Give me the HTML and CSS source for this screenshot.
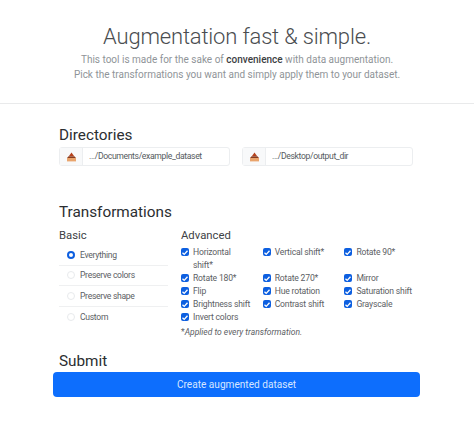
FILE: index.html
```html
<!DOCTYPE html>
<html lang="en">
<head>
<meta charset="utf-8">
<title>Augmentation</title>
<link rel="stylesheet" href="styles.css">
</head>
<body>
<header class="hero">
  <h1>Augmentation fast &amp; simple.</h1>
  <p>This tool is made for the sake of <strong>convenience</strong> with data augmentation.</p>
  <p>Pick the transformations you want and simply apply them to your dataset.</p>
</header>
<main class="main">
  <section class="dirs">
    <h2>Directories</h2>
    <div class="dir-row">
      <div class="dir">
        <span class="dir-icon"><svg width="11" height="10" viewBox="0 0 11 10"><path d="M5.5 0.5 8 4H3z" fill="#b5401c"/><path d="M2.6 4.2h5.8L10 6H1z" fill="#8a3a1c"/><path d="M1 6h9v3.4H1z" fill="#e9a46c"/></svg></span>
        <span class="dir-text">.../Documents/example_dataset</span>
      </div>
      <div class="dir">
        <span class="dir-icon"><svg width="11" height="10" viewBox="0 0 11 10"><path d="M5.5 0.5 8 4H3z" fill="#b5401c"/><path d="M2.6 4.2h5.8L10 6H1z" fill="#8a3a1c"/><path d="M1 6h9v3.4H1z" fill="#e9a46c"/></svg></span>
        <span class="dir-text">.../Desktop/output_dir</span>
      </div>
    </div>
  </section>
  <section class="trans">
    <h2>Transformations</h2>
    <div class="trans-cols">
      <div class="basic">
        <h3>Basic</h3>
        <div class="radio-row"><span class="radio on"></span>Everything</div>
        <div class="radio-row"><span class="radio"></span>Preserve colors</div>
        <div class="radio-row"><span class="radio"></span>Preserve shape</div>
        <div class="radio-row"><span class="radio"></span>Custom</div>
      </div>
      <div class="advanced">
        <h3>Advanced</h3>
        <div class="checks">
          <label class="check narrow"><span class="box"><svg width="9" height="9" viewBox="0 0 8 8"><path d="M1.5 4.2 3.2 5.9 6.5 2.2" fill="none" stroke="#fff" stroke-width="1.3"/></svg></span>Horizontal shift*</label>
          <label class="check"><span class="box"><svg width="9" height="9" viewBox="0 0 8 8"><path d="M1.5 4.2 3.2 5.9 6.5 2.2" fill="none" stroke="#fff" stroke-width="1.3"/></svg></span>Vertical shift*</label>
          <label class="check"><span class="box"><svg width="9" height="9" viewBox="0 0 8 8"><path d="M1.5 4.2 3.2 5.9 6.5 2.2" fill="none" stroke="#fff" stroke-width="1.3"/></svg></span>Rotate 90*</label>
          <label class="check"><span class="box"><svg width="9" height="9" viewBox="0 0 8 8"><path d="M1.5 4.2 3.2 5.9 6.5 2.2" fill="none" stroke="#fff" stroke-width="1.3"/></svg></span>Rotate 180*</label>
          <label class="check"><span class="box"><svg width="9" height="9" viewBox="0 0 8 8"><path d="M1.5 4.2 3.2 5.9 6.5 2.2" fill="none" stroke="#fff" stroke-width="1.3"/></svg></span>Rotate 270*</label>
          <label class="check"><span class="box"><svg width="9" height="9" viewBox="0 0 8 8"><path d="M1.5 4.2 3.2 5.9 6.5 2.2" fill="none" stroke="#fff" stroke-width="1.3"/></svg></span>Mirror</label>
          <label class="check"><span class="box"><svg width="9" height="9" viewBox="0 0 8 8"><path d="M1.5 4.2 3.2 5.9 6.5 2.2" fill="none" stroke="#fff" stroke-width="1.3"/></svg></span>Flip</label>
          <label class="check"><span class="box"><svg width="9" height="9" viewBox="0 0 8 8"><path d="M1.5 4.2 3.2 5.9 6.5 2.2" fill="none" stroke="#fff" stroke-width="1.3"/></svg></span>Hue rotation</label>
          <label class="check"><span class="box"><svg width="9" height="9" viewBox="0 0 8 8"><path d="M1.5 4.2 3.2 5.9 6.5 2.2" fill="none" stroke="#fff" stroke-width="1.3"/></svg></span>Saturation shift</label>
          <label class="check"><span class="box"><svg width="9" height="9" viewBox="0 0 8 8"><path d="M1.5 4.2 3.2 5.9 6.5 2.2" fill="none" stroke="#fff" stroke-width="1.3"/></svg></span>Brightness shift</label>
          <label class="check"><span class="box"><svg width="9" height="9" viewBox="0 0 8 8"><path d="M1.5 4.2 3.2 5.9 6.5 2.2" fill="none" stroke="#fff" stroke-width="1.3"/></svg></span>Contrast shift</label>
          <label class="check"><span class="box"><svg width="9" height="9" viewBox="0 0 8 8"><path d="M1.5 4.2 3.2 5.9 6.5 2.2" fill="none" stroke="#fff" stroke-width="1.3"/></svg></span>Grayscale</label>
          <label class="check"><span class="box"><svg width="9" height="9" viewBox="0 0 8 8"><path d="M1.5 4.2 3.2 5.9 6.5 2.2" fill="none" stroke="#fff" stroke-width="1.3"/></svg></span>Invert colors</label>
        </div>
        <p class="note">*<em>Applied to every transformation.</em></p>
      </div>
    </div>
  </section>
  <section class="submit">
    <h2>Submit</h2>
    <button class="btn" type="button">Create augmented dataset</button>
  </section>
</main>
</body>
</html>
```
FILE: styles.css
```css
* { box-sizing: border-box; }
html, body { margin: 0; padding: 0; }
body {
  width: 474px;
  height: 426px;
  overflow: hidden;
  background: #fff;
  color: #212529;
  font-family: Roboto, "Noto Sans", sans-serif;
}
h1, h2, h3, p { margin: 0; font-weight: 400; }
.hero {
  height: 104px;
  padding-top: 22px;
  border-bottom: 1px solid #e9eaeb;
  text-align: center;
}
.hero h1 {
  font-size: 22px;
  line-height: 30px;
  font-weight: 300;
  letter-spacing: -0.17px;
  color: #4a4d50;
}
.hero p {
  font-size: 10px;
  line-height: 15px;
  color: #8f9498;
}
.hero p strong { font-weight: 500; color: #3c4043; }
.main { padding: 0 54px 0 59px; }
h2 {
  font-size: 15.3px;
  line-height: 20px;
  color: #2b2e31;
}
h3 {
  font-size: 11.3px;
  line-height: 15px;
  color: #3d4145;
}
.dirs { padding-top: 21px; }
.dir-row { display: flex; gap: 12px; margin-top: 2px; }
.dir {
  width: 171px;
  height: 19px;
  display: flex;
  border: 1px solid #eceef0;
  border-radius: 3px;
  font-size: 8.6px;
  letter-spacing: -0.35px;
  color: #555a5e;
}
.dir-icon {
  width: 23px;
  display: flex;
  align-items: center;
  justify-content: center;
  background: #f8f9fa;
  border-right: 1px solid #eceef0;
}
.dir-text { padding-left: 6px; line-height: 17px; }
.trans { margin-top: 36px; }
.trans-cols { display: flex; margin-top: 6px; }
.basic { width: 122px; flex: none; }
.basic h3 { margin-bottom: 2px; }
.radio-row {
  width: 109px;
  height: 20.6px;
  padding-left: 8px;
  display: flex;
  align-items: center;
  gap: 5px;
  font-size: 8.6px;
  letter-spacing: -0.3px;
  color: #5c6064;
  border-bottom: 1px solid #eff0f1;
}
.radio-row:last-child { border-bottom: 0; }
.radio {
  width: 8px;
  height: 8px;
  border-radius: 50%;
  border: 1px solid #e8eaec;
  background: #fff;
}
.radio.on { border: 2.4px solid #0d5fe0; }
.advanced { flex: 1; }
.advanced h3 { margin-bottom: 3px; }
.checks {
  display: grid;
  grid-template-columns: repeat(3, 81.7px);
  font-size: 8.6px;
  letter-spacing: -0.18px;
  line-height: 13px;
  color: #5c6064;
}
.check { display: flex; gap: 4px; }
.check.narrow { padding-right: 24px; }
.box {
  flex: none;
  width: 8px;
  height: 8px;
  margin-top: 2px;
  border-radius: 2px;
  background: #0d5fe0;
  display: flex;
  align-items: center;
  justify-content: center;
}
.note {
  margin-top: 2px;
  font-size: 8.5px;
  line-height: 13px;
  color: #5c6064;
}
.submit { margin-top: 12px; }
.btn {
  display: block;
  width: 367px;
  height: 25px;
  margin: 1px 0 0 -6px;
  padding: 0;
  border: 0;
  border-radius: 4px;
  background: #0d6efd;
  color: #d6e6ff;
  font: 400 10.1px/25px Roboto, "Noto Sans", sans-serif;
}
```
